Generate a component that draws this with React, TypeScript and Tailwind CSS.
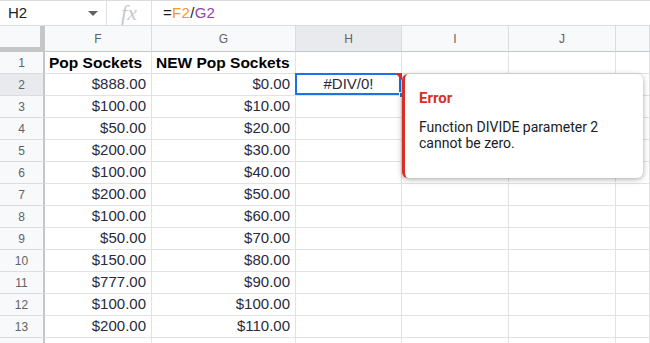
import React from 'react';

const colLetters = ['F', 'G', 'H', 'I', 'J', ''];

const rows: [string, string][] = [
  ['$888.00', '$0.00'],
  ['$100.00', '$10.00'],
  ['$50.00', '$20.00'],
  ['$200.00', '$30.00'],
  ['$100.00', '$40.00'],
  ['$200.00', '$50.00'],
  ['$100.00', '$60.00'],
  ['$50.00', '$70.00'],
  ['$150.00', '$80.00'],
  ['$777.00', '$90.00'],
  ['$100.00', '$100.00'],
  ['$200.00', '$110.00'],
  ['', ''],
];

const cell = 'h-[22px] border-r border-b border-[#e2e2e2] bg-white';

const App: React.FC = () => {
  return (
    <div className="relative w-[650px] h-[343px] overflow-hidden bg-white font-['Liberation_Sans',Arial,sans-serif] text-[#222]">
      {/* Formula bar */}
      <div className="flex items-center h-[26px] border-t border-b border-[#dadce0] bg-white">
        <div className="flex items-center w-[107px] h-full pl-[8px] pr-[6px] border-r border-[#e0e0e0]">
          <span className="text-[15px] text-[#202124]">H2</span>
          <span className="ml-auto mr-[2px] w-0 h-0 border-l-[5px] border-r-[5px] border-t-[5px] border-l-transparent border-r-transparent border-t-[#5f6368]" />
        </div>
        <div className="flex items-center justify-center w-[45px] h-full border-r border-[#e0e0e0]">
          <span className="font-['Liberation_Serif',serif] italic text-[22px] text-[#c8c8c8] leading-none">fx</span>
        </div>
        <div className="pl-[11px] text-[15px] tracking-[0.3px]">
          <span className="text-[#202124]">=</span>
          <span className="text-[#f29a28]">F2</span>
          <span className="text-[#202124]">/</span>
          <span className="text-[#8e44ad]">G2</span>
        </div>
      </div>

      {/* Grid */}
      <div className="grid grid-cols-[45px_107px_144px_106px_107px_107px_34px]">
        {/* header row */}
        <div className="h-[26px] bg-[#f8f9fa] border-r-[5px] border-b-[5px] border-[#c4c7c5]" />
        {colLetters.map((l, i) => (
          <div
            key={i}
            className={`h-[26px] flex items-center justify-center text-[12px] text-[#5f6368] border-r border-b border-r-[#dadce0] border-b-[#c4c7c5] ${
              l === 'H' ? 'bg-[#e8eaed]' : 'bg-[#f8f9fa]'
            }`}
          >
            {l}
          </div>
        ))}

        {/* row 1 */}
        <div className="h-[22px] flex items-center justify-center text-[12px] text-[#5f6368] bg-[#f8f9fa] border-r-2 border-b border-r-[#c4c7c5] border-b-[#dadce0]">
          1
        </div>
        <div className={`${cell} flex items-center pl-[4px] text-[15.5px] font-bold text-black`}>Pop Sockets</div>
        <div className={`${cell} flex items-center pl-[4px] text-[15.5px] font-bold text-black`}>NEW Pop Sockets</div>
        <div className={cell} />
        <div className={cell} />
        <div className={cell} />
        <div className={cell} />

        {rows.map(([f, g], i) => {
          const n = i + 2;
          return (
            <React.Fragment key={n}>
              <div
                className={`h-[22px] flex items-center justify-center text-[12px] text-[#5f6368] border-r-2 border-b border-r-[#c4c7c5] border-b-[#dadce0] ${
                  n === 2 ? 'bg-[#e8eaed]' : 'bg-[#f8f9fa]'
                }`}
              >
                {n < 14 ? n : ''}
              </div>
              <div className={`${cell} flex items-center justify-end pr-[5px] text-[15px] text-[#2a2a3c]`}>{f}</div>
              <div className={`${cell} flex items-center justify-end pr-[5px] text-[15px] text-[#2a2a3c]`}>{g}</div>
              {n === 2 ? (
                <div className={`${cell} relative flex items-center justify-center text-[15px] text-[#2a2a3c]`}>
                  #DIV/0!
                  <span className="absolute -left-[1px] -top-[1px] right-0 bottom-0 border-2 border-[#1a73e8]" />
                  <span className="absolute right-[-1px] top-[-1px] w-0 h-0 border-l-[7px] border-b-[7px] border-l-transparent border-b-transparent border-t-0 border-r-[7px] border-r-[#d93025]" />
                  <span className="absolute right-[-4px] bottom-[-3px] w-[6px] h-[6px] bg-[#1a73e8] border border-white" />
                </div>
              ) : (
                <div className={cell} />
              )}
              <div className={cell} />
              <div className={cell} />
              <div className={cell} />
            </React.Fragment>
          );
        })}
      </div>

      {/* Error tooltip */}
      <div className="absolute left-[402px] top-[74px] w-[241px] h-[104px] bg-white rounded-[6px] border-l-[3px] border-[#d93025] shadow-[0_1px_4px_rgba(0,0,0,0.25),0_2px_8px_rgba(0,0,0,0.12)] pl-[14px] pt-[14px] font-['Roboto','Liberation_Sans',sans-serif]">
        <div className="text-[15px] font-bold text-[#d93025] leading-[20px]">Error</div>
        <div className="mt-[11px] text-[14px] text-[#202124] leading-[16px]">
          Function DIVIDE parameter 2
          <br />
          cannot be zero.
        </div>
      </div>
    </div>
  );
};

export default App;
